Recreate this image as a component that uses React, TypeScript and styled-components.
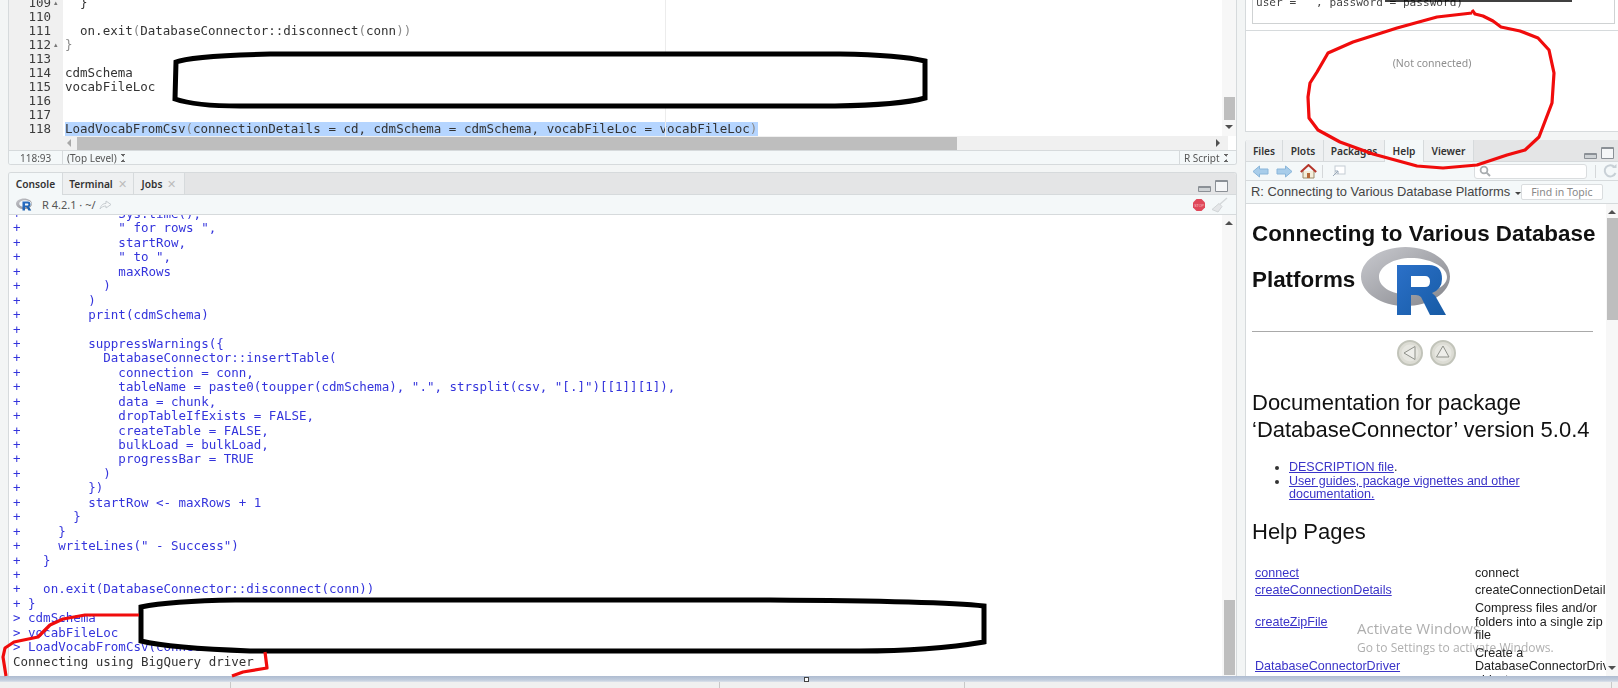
import React from "react";
import styled, { createGlobalStyle } from "styled-components";

const Global = createGlobalStyle`
  html, body { margin: 0; padding: 0; width: 1618px; height: 688px; overflow: hidden; background: #f3f5f5; }
  #root { width: 1618px; height: 688px; }
  * { box-sizing: border-box; }
`;

const MONO = `"DejaVu Sans Mono", "Liberation Mono", monospace`;
const UI = `"Noto Sans", "Open Sans", sans-serif`;
const ARIAL = `"Liberation Sans", Arial, sans-serif`;
const BORDER = "#d6dadc";

const Page = styled.div`
  position: relative; width: 1618px; height: 688px; display: flex; flex-direction: column;
  overflow: hidden; filter: blur(0.3px);
`;
const Workspace = styled.div`display: flex; height: 676px; padding-left: 8px; gap: 8px;`;
const LeftColumn = styled.div`width: 1229px; display: flex; flex-direction: column; gap: 7px;`;
const RightColumn = styled.div`flex: 1; min-width: 0; display: flex; flex-direction: column; gap: 8px;`;

const EditorPane = styled.section`
  height: 165px; display: flex; flex-direction: column; background: #fff;
  border: 1px solid ${BORDER}; border-top: 0; border-radius: 0 0 3px 3px; overflow: hidden;
`;
const EditorMain = styled.div`height: 136px; display: flex;`;
const Gutter = styled.div`
  width: 54px; background: #f0f0f0; display: flex; flex-direction: column; justify-content: flex-end;
`;
const GutterLine = styled.div`
  height: 14px; display: flex; justify-content: flex-end; align-items: center;
  font: 12.5px/14px ${MONO}; color: #3c3c3c;
`;
const FoldSlot = styled.span`
  width: 12px; padding-left: 3px; font-size: 7px; line-height: 14px; color: #777; font-family: ${UI};
`;
const CodeArea = styled.div`
  position: relative; flex: 1; min-width: 0; display: flex; flex-direction: column; justify-content: flex-end;
  overflow: hidden; padding-left: 2px;
`;
const MarginLine = styled.div`position: absolute; left: 602px; top: 0; bottom: 0; width: 1px; background: #ececec;`;
const CodeLine = styled.div<{ $sel?: boolean }>`
  height: 14px; width: ${(p) => (p.$sel ? "693px" : "auto")}; white-space: pre; flex: none;
  font: 12.5px/14px ${MONO}; color: #333; background: ${(p) => (p.$sel ? "#b5d5ff" : "transparent")};
`;
const Paren = styled.span`color: #8a8a8a;`;

const VScroll = styled.div<{ $w?: number }>`
  width: ${(p) => p.$w ?? 14}px; flex: none; display: flex; flex-direction: column; align-items: center; background: #f7f7f7; position: relative;
`;
const VThumb = styled.div<{ $top: number; $h: number }>`
  width: 11px; height: ${(p) => p.$h}px; margin-top: ${(p) => p.$top}px; background: #bebebe;
`;
const Tri = styled.span<{ $dir: "up" | "down" | "left" | "right" }>`
  display: block; width: 0; height: 0; flex: none;
  ${(p) =>
    p.$dir === "up"
      ? "border-left:4px solid transparent;border-right:4px solid transparent;border-bottom:4px solid #505050;"
      : p.$dir === "down"
      ? "border-left:4px solid transparent;border-right:4px solid transparent;border-top:4px solid #505050;"
      : p.$dir === "left"
      ? "border-top:4px solid transparent;border-bottom:4px solid transparent;border-right:4px solid #a8a8a8;"
      : "border-top:4px solid transparent;border-bottom:4px solid transparent;border-left:4px solid #505050;"}
`;
const SpacerV = styled.div<{ $h: number }>`height: ${(p) => p.$h}px; flex: none;`;
const Grow = styled.div`flex: 1;`;

const HScroll = styled.div`
  height: 14px; flex: none; display: flex; align-items: center; background: #f0f0f0; padding-left: 58px;
`;
const HThumb = styled.div`width: 880px; height: 13px; margin-left: 6px; background: #bebebe;`;
const HEnd = styled.div`
  margin-left: auto; width: 20px; height: 14px; display: flex; align-items: center; background: linear-gradient(90deg,#f0f0f0 60%,#fff 60%);
`;

const StatusBar = styled.div`
  height: 15px; flex: none; display: flex; align-items: center; background: #f4f8f9; border-top: 1px solid ${BORDER};
  font: 10px/14px ${UI}; color: #555;
`;
const Position = styled.div`width: 54px; padding-left: 11px; height: 100%; border-right: 1px solid ${BORDER};`;
const Scope = styled.div`padding-left: 4px; flex: 1; display: flex; align-items: center; gap: 4px;`;
const FileType = styled.div`width: 57px; height: 100%; padding-left: 4px; border-left: 1px solid ${BORDER}; display: flex; align-items: center; gap: 4px;`;
const UpDown = styled.span`
  display: inline-block; width: 5px; height: 8px;
  background:
    linear-gradient(45deg, transparent 50%, #666 50%) 0 0 / 2.5px 3px no-repeat,
    linear-gradient(-45deg, transparent 50%, #666 50%) 2.5px 0 / 2.5px 3px no-repeat,
    linear-gradient(135deg, transparent 50%, #666 50%) 0 5px / 2.5px 3px no-repeat,
    linear-gradient(-135deg, transparent 50%, #666 50%) 2.5px 5px / 2.5px 3px no-repeat;
`;

const ConsolePane = styled.section`
  flex: 1; min-height: 0; display: flex; flex-direction: column; background: #fff;
  border: 1px solid ${BORDER}; border-bottom: 0; border-radius: 3px 3px 0 0; overflow: hidden;
`;
const TabStrip = styled.div`
  height: 22px; flex: none; display: flex; align-items: stretch; background: #e4e5e6; border-bottom: 1px solid ${BORDER};
`;
const Tab = styled.div<{ $active?: boolean; $w: number }>`
  width: ${(p) => p.$w}px; margin-bottom: ${(p) => (p.$active ? "-1px" : "0")}; display: flex; align-items: center; justify-content: center; gap: 5px;
  background: ${(p) => (p.$active ? "#f4f8f9" : "#eef0f1")}; border-right: 1px solid ${BORDER};
  font: 600 10.2px/14px ${UI}; color: #333;
`;
const TabClose = styled.span`color: #bcbcbc; font-size: 11px; font-weight: 400;`;
const WindowControls = styled.div<{ $right: number }>`
  margin-left: auto; padding-right: ${(p) => p.$right}px; display: flex; align-items: flex-end; gap: 4px; padding-bottom: 2px;
`;
const Minimize = styled.span`
  display: block; width: 13px; height: 6px; border: 1px solid #8b9096; border-top-width: 2px; background: #cfd3d6; border-radius: 1px;
`;
const Maximize = styled.span`
  display: block; width: 13px; height: 12px; border: 1px solid #8b9096; border-top-width: 2px; background: #f5f6f7; border-radius: 1px;
`;
const ConsoleBar = styled.div`
  height: 20px; flex: none; display: flex; align-items: center; padding: 0 8px 0 7px; background: #f4f8f9; border-bottom: 1px solid ${BORDER};
  font: 11px/14px ${UI}; color: #555;
`;
const ConsoleBarLabel = styled.span`margin-left: 10px;`;
const ConsoleBarEnd = styled.div`margin-left: auto; display: flex; align-items: center; gap: 6px;`;
const ConsoleMain = styled.div`flex: 1; min-height: 0; display: flex;`;
const ConsoleBody = styled.div`
  flex: 1; min-width: 0; display: flex; flex-direction: column; justify-content: flex-end; overflow: hidden;
  padding: 0 0 7px 4px;
`;
const ConsoleLine = styled.div<{ $out?: boolean }>`
  flex: none; height: 14.45px; white-space: pre; font: 12.5px/14.45px ${MONO};
  color: ${(p) => (p.$out ? "#333" : "#3434dc")};
`;

const ObjectsPane = styled.section`
  height: 132px; flex: none; background: #fff; border-bottom: 1px solid ${BORDER}; border-left: 1px solid ${BORDER}; display: flex; flex-direction: column;
`;
const ConnectionBox = styled.div`
  height: 31px; flex: none; padding: 0 3px 6px 6px; border-bottom: 1px solid ${BORDER};
`;
const ConnectionInner = styled.div`
  height: 24px; border: 1px solid #cfd2d3; border-top: 0; padding-left: 3px;
  font: 11.1px/6px ${MONO}; color: #444; white-space: pre; overflow: hidden;
`;
const NotConnected = styled.div`
  text-align: center; padding-top: 25px; font: 10.5px/14px ${UI}; color: #8e8e8e;
`;

const HelpPane = styled.section`
  flex: 1; min-height: 0; display: flex; flex-direction: column; background: #fff; border-left: 1px solid ${BORDER}; border-radius: 3px 0 0 0; overflow: hidden;
`;
const HelpToolbar = styled.div`
  height: 19px; flex: none; display: flex; align-items: center; padding-left: 6px; background: #f4f8f9; border-bottom: 1px solid ${BORDER};
`;
const Sep = styled.span<{ $ml: number }>`display: block; width: 1px; height: 13px; background: #d5d8da; margin-left: ${(p) => p.$ml}px;`;
const SearchBox = styled.div`
  margin-left: auto; width: 113px; height: 15px; background: #fff; border: 1px solid #dadddf; border-radius: 3px; display: flex; align-items: center; padding-left: 4px;
`;
const ToolEnd = styled.div`display: flex; align-items: center; gap: 7px; padding: 0 0 0 8px; width: 31px;`;
const TopicBar = styled.div`
  height: 23px; flex: none; display: flex; align-items: center; padding-left: 5px; background: #f4f8f9; border-bottom: 1px solid ${BORDER};
  font: 12.9px/16px ${ARIAL}; color: #444; white-space: nowrap;
`;
const Caret = styled.span`
  width: 0; height: 0; margin-left: 5px; margin-top: 3px; border-left: 3px solid transparent; border-right: 3px solid transparent; border-top: 3px solid #444;
`;
const FindBox = styled.div`
  margin-left: auto; margin-right: 15px; width: 85px; height: 16px; background: #fff; border: 1px solid #dadddf; border-radius: 2px; padding-left: 9px;
  font: 10.5px/14px ${UI}; color: #888;
`;
const HelpMain = styled.div`flex: 1; min-height: 0; display: flex;`;
const HelpBody = styled.article`
  flex: 1; min-width: 0; padding: 7px 6px 0 6px; overflow: hidden; font-family: ${ARIAL}; color: #111;
`;
const HelpTitle = styled.h1`
  margin: 0; font: 700 22.4px/46px ${ARIAL}; color: #111; white-space: nowrap;
`;
const TitleRow = styled.div`display: flex; align-items: flex-start; height: 60px;`;
const TitleWord = styled.span`font: 700 22.4px/46px ${ARIAL}; margin-right: 6px;`;
const LogoSlot = styled.div`margin-top: -10px; flex: none;`;
const Rule = styled.hr`margin: 14px 7px 0 0; border: 0; height: 1px; background: #a9a9a9;`;
const NavIcons = styled.div`display: flex; justify-content: center; gap: 7px; margin-top: 8px;`;
const DocHeading = styled.h2`margin: 23px 0 0; font: 400 22px/27px ${ARIAL}; color: #111; white-space: nowrap;`;
const LinkList = styled.ul`margin: 18px 0 0; padding: 0 0 0 37px; font: 12.5px/13.6px ${ARIAL};`;
const LinkItem = styled.li`color: #333;`;
const HelpLink = styled.a`color: #3a33c8; text-decoration: underline;`;
const PagesHeading = styled.h2`margin: 16px 0 0; font: 400 22px/27px ${ARIAL}; color: #111;`;
const IndexGrid = styled.div`
  margin-top: 20px; display: grid; grid-template-columns: 223px 137px; font: 12.55px/13.6px ${ARIAL}; width: 360px;
`;
const IndexName = styled.div`padding: 2px 0 2px 3px; align-self: center;`;
const IndexDesc = styled.div`padding: 2px 0; overflow: hidden; color: #222;`;
const NoWrap = styled.span`white-space: nowrap;`;

const Splitter = styled.div`
  position: relative; height: 6px; flex: none; background: linear-gradient(180deg,#aebbd0,#c3cede 70%,#dde3ec);
`;
const SplitHandle = styled.span`
  position: absolute; left: 804px; top: 1px; width: 5px; height: 5px; background: #fff; border: 1px solid #444;
`;
const TaskBar = styled.div`height: 6px; flex: none; display: flex; background: #f0f0f0;`;
const TaskCell = styled.span<{ $w: number }>`width: ${(p) => p.$w}px; height: 100%; border-right: 1px solid #c8c8c8;`;

const Watermark = styled.div`
  position: absolute; left: 1357px; top: 618px; pointer-events: none; color: rgba(125,125,125,.62); font-family: "Open Sans", sans-serif;
`;
const WatermarkTitle = styled.div`font-size: 15px; line-height: 20px;`;
const WatermarkSub = styled.div`font-size: 12px; line-height: 15px; margin-top: 2px; white-space: nowrap;`;
const Annotations = styled.svg`position: absolute; left: 0; top: 0; pointer-events: none;`;

const RLogo = ({ w, h, id }: { w: number; h: number; id: string }) => (
  <svg width={w} height={h} viewBox="0 0 89 68" style={{ flex: "none", display: "block" }}>
    <defs>
      <linearGradient id={id + "g"} x1="0" y1="0" x2="1" y2="1">
        <stop offset="0" stopColor="#c9cacf" />
        <stop offset="1" stopColor="#85868c" />
      </linearGradient>
      <linearGradient id={id + "b"} x1="0" y1="0" x2="1" y2="1">
        <stop offset="0" stopColor="#2b70c8" />
        <stop offset="1" stopColor="#175ba5" />
      </linearGradient>
    </defs>
    <path
      fillRule="evenodd"
      fill={`url(#${id}g)`}
      d="M44.5 0C69 0 89 13.2 89 29.5S69 59 44.5 59 0 45.8 0 29.5 20 0 44.5 0ZM50 11C33 11 18 19 18 30S33 48 50 48 86 41 86 30 67 11 50 11Z"
    />
    <path
      fillRule="evenodd"
      fill={`url(#${id}b)`}
      d="M36 18H68Q81 18 81 32 81 42 71 46 74 48 76 52L85 68H69L60 50Q58 48 55 48H50V68H36ZM50 29V40H64Q69 40 69 34.5 69 29 64 29Z"
    />
  </svg>
);

const NavCircle = ({ up }: { up?: boolean }) => (
  <svg width="26" height="26" viewBox="0 0 26 26">
    <circle cx="13" cy="13" r="12" fill="#dcdcd4" stroke="#c2c4ba" strokeWidth="2" />
    <circle cx="13" cy="13" r="8.5" fill="#e6e6e0" />
    {up ? (
      <path d="M6.5 17 13 6l6 11Z" fill="#eeeeea" stroke="#8f918a" />
    ) : (
      <path d="M18 6.5v13L7 13Z" fill="#eeeeea" stroke="#8f918a" />
    )}
  </svg>
);

const BlueArrow = ({ right }: { right?: boolean }) => (
  <svg width="17" height="13" viewBox="0 0 17 13" style={{ transform: right ? "scaleX(-1)" : undefined, flex: "none", marginRight: 7 }}>
    <path d="M1 6.5 7.5 1v3H16v5H7.5v3Z" fill="#a8cdea" stroke="#8ab6da" />
  </svg>
);

const HomeIcon = () => (
  <svg width="17" height="15" viewBox="0 0 17 15" style={{ flex: "none" }}>
    <path d="M3 7v7h11V7" fill="#f4eeda" stroke="#9c8b6a" />
    <rect x="7" y="9" width="3" height="5" fill="#b56a3a" />
    <path d="M.8 8 8.5 1l7.7 7" fill="none" stroke="#b5352a" strokeWidth="2" />
  </svg>
);

const PopoutIcon = () => (
  <svg width="14" height="12" viewBox="0 0 14 12" style={{ marginLeft: 9, flex: "none" }}>
    <rect x="3" y="1" width="10" height="8" fill="#fff" stroke="#c4ccd4" />
    <path d="M1 11 6 6M6 6v3M6 6H3" stroke="#98a8b8" fill="none" />
  </svg>
);

const SearchGlyph = () => (
  <svg width="12" height="12" viewBox="0 0 12 12">
    <circle cx="5" cy="5" r="3.4" fill="none" stroke="#a9adb0" strokeWidth="1.8" />
    <path d="m7.6 7.6 3.4 3.4" stroke="#a9adb0" strokeWidth="2" />
  </svg>
);

const RefreshGlyph = () => (
  <svg width="15" height="14" viewBox="0 0 15 14">
    <path d="M12.5 9A5.6 5.6 0 1 1 11.5 3" fill="none" stroke="#c8d0d6" strokeWidth="2" />
    <path d="M9 4h4.5V0Z" fill="#c8d0d6" />
  </svg>
);

const StopIcon = () => (
  <svg width="12" height="12" viewBox="0 0 12 12">
    <path d="M3.5 0h5L12 3.5v5L8.5 12h-5L0 8.5v-5Z" fill="#e0485a" />
    <text x="6" y="7.6" fontSize="3.6" textAnchor="middle" fill="#f7c7cc" fontFamily="Liberation Sans">STOP</text>
  </svg>
);

const BroomIcon = () => (
  <svg width="17" height="16" viewBox="0 0 17 16">
    <path d="M16 1 8 8" stroke="#d4d8da" strokeWidth="1.4" />
    <path d="M8 6.5 11 9.5 7 15 1 12.5Z" fill="#e4e6e8" stroke="#d0d4d6" />
  </svg>
);

const ShareGlyph = () => (
  <svg width="13" height="11" viewBox="0 0 13 11" style={{ marginLeft: 3 }}>
    <path d="M1 10C2 6 4 4.5 7 4.5V2l5 3.5L7 9V7C4.5 7 2.5 8 1 10Z" fill="#f6f8f9" stroke="#c6ccd0" />
  </svg>
);

type EL = { n: number; fold?: boolean; code?: React.ReactNode; sel?: boolean };
const editorLines: EL[] = [
  { n: 109, fold: true, code: "  }" },
  { n: 110 },
  { n: 111, code: <>  on.exit<Paren>(</Paren>DatabaseConnector::disconnect<Paren>(</Paren>conn<Paren>))</Paren></> },
  { n: 112, fold: true, code: <Paren>{"}"}</Paren> },
  { n: 113 },
  { n: 114, code: "cdmSchema" },
  { n: 115, code: "vocabFileLoc" },
  { n: 116 },
  { n: 117 },
  {
    n: 118,
    sel: true,
    code: <>LoadVocabFromCsv<Paren>(</Paren>connectionDetails = cd, cdmSchema = cdmSchema, vocabFileLoc = vocabFileLoc<Paren>)</Paren></>,
  },
];

const consoleLines = [
  '+             Sys.time(),',
  '+             " for rows ",',
  '+             startRow,',
  '+             " to ",',
  '+             maxRows',
  '+           )',
  '+         )',
  '+         print(cdmSchema)',
  '+ ',
  '+         suppressWarnings({',
  '+           DatabaseConnector::insertTable(',
  '+             connection = conn,',
  '+             tableName = paste0(toupper(cdmSchema), ".", strsplit(csv, "[.]")[[1]][1]),',
  '+             data = chunk,',
  '+             dropTableIfExists = FALSE,',
  '+             createTable = FALSE,',
  '+             bulkLoad = bulkLoad,',
  '+             progressBar = TRUE',
  '+           )',
  '+         })',
  '+         startRow <- maxRows + 1',
  '+       }',
  '+     }',
  '+     writeLines(" - Success")',
  '+   }',
  '+ ',
  '+   on.exit(DatabaseConnector::disconnect(conn))',
  '+ }',
  '> cdmSchema',
  '> vocabFileLoc',
  '> LoadVocabFromCsv(connectionDetails = cd, cdmSchema = cdmSchema, vocabFileLoc = vocabFileLoc)',
];

const rightTabs: [string, number, boolean?][] = [
  ["Files", 37],
  ["Plots", 41],
  ["Packages", 61],
  ["Help", 39, true],
  ["Viewer", 50],
];

export default function App() {
  return (
    <Page>
      <Global />
      <Workspace>
        <LeftColumn>
          <EditorPane>
            <EditorMain>
              <Gutter>
                {editorLines.map((l) => (
                  <GutterLine key={l.n}>
                    {l.n}
                    <FoldSlot>{l.fold ? "▴" : ""}</FoldSlot>
                  </GutterLine>
                ))}
              </Gutter>
              <CodeArea>
                <MarginLine />
                {editorLines.map((l) => (
                  <CodeLine key={l.n} $sel={l.sel}>{l.code ?? " "}</CodeLine>
                ))}
              </CodeArea>
              <VScroll>
                <VThumb $top={97} $h={23} />
                <SpacerV $h={5} />
                <Tri $dir="down" />
              </VScroll>
            </EditorMain>
            <HScroll>
              <Tri $dir="left" />
              <HThumb />
              <HEnd><Tri $dir="right" /></HEnd>
            </HScroll>
            <StatusBar>
              <Position>118:93</Position>
              <Scope>(Top Level)<UpDown /></Scope>
              <FileType>R Script<UpDown /></FileType>
            </StatusBar>
          </EditorPane>

          <ConsolePane>
            <TabStrip>
              <Tab $active $w={54}>Console</Tab>
              <Tab $w={71}>Terminal <TabClose>✕</TabClose></Tab>
              <Tab $w={51}>Jobs <TabClose>✕</TabClose></Tab>
              <WindowControls $right={8}><Minimize /><Maximize /></WindowControls>
            </TabStrip>
            <ConsoleBar>
              <RLogo w={16} h={13} id="rs" />
              <ConsoleBarLabel>R 4.2.1 · ~/</ConsoleBarLabel>
              <ShareGlyph />
              <ConsoleBarEnd><StopIcon /><BroomIcon /></ConsoleBarEnd>
            </ConsoleBar>
            <ConsoleMain>
              <ConsoleBody>
                {consoleLines.map((l, i) => <ConsoleLine key={i}>{l}</ConsoleLine>)}
                <ConsoleLine $out>Connecting using BigQuery driver</ConsoleLine>
              </ConsoleBody>
              <VScroll>
                <SpacerV $h={6} />
                <Tri $dir="up" />
                <Grow />
                <VThumb $top={0} $h={75} />
                <SpacerV $h={1} />
              </VScroll>
            </ConsoleMain>
          </ConsolePane>
        </LeftColumn>

        <RightColumn>
          <ObjectsPane>
            <ConnectionBox>
              <ConnectionInner>user =   , password = password)</ConnectionInner>
            </ConnectionBox>
            <NotConnected>(Not connected)</NotConnected>
          </ObjectsPane>

          <HelpPane>
            <TabStrip>
              {rightTabs.map(([t, w, a]) => <Tab key={t} $w={w} $active={a}>{t}</Tab>)}
              <WindowControls $right={4}><Minimize /><Maximize /></WindowControls>
            </TabStrip>
            <HelpToolbar>
              <BlueArrow />
              <BlueArrow right />
              <HomeIcon />
              <Sep $ml={5} />
              <PopoutIcon />
              <SearchBox><SearchGlyph /></SearchBox>
              <ToolEnd><Sep $ml={0} /><RefreshGlyph /></ToolEnd>
            </HelpToolbar>
            <TopicBar>
              R: Connecting to Various Database Platforms<Caret />
              <FindBox>Find in Topic</FindBox>
            </TopicBar>
            <HelpMain>
              <HelpBody>
                <HelpTitle>Connecting to Various Database</HelpTitle>
                <TitleRow>
                  <TitleWord>Platforms</TitleWord>
                  <LogoSlot><RLogo w={89} h={68} id="rl" /></LogoSlot>
                </TitleRow>
                <Rule />
                <NavIcons><NavCircle /><NavCircle up /></NavIcons>
                <DocHeading>Documentation for package<br />‘DatabaseConnector’ version 5.0.4</DocHeading>
                <LinkList>
                  <LinkItem><HelpLink>DESCRIPTION file</HelpLink>.</LinkItem>
                  <LinkItem><HelpLink>User guides, package vignettes and other documentation.</HelpLink></LinkItem>
                </LinkList>
                <PagesHeading>Help Pages</PagesHeading>
                <IndexGrid>
                  <IndexName><HelpLink>connect</HelpLink></IndexName>
                  <IndexDesc>connect</IndexDesc>
                  <IndexName><HelpLink>createConnectionDetails</HelpLink></IndexName>
                  <IndexDesc><NoWrap>createConnectionDetails</NoWrap></IndexDesc>
                  <IndexName><HelpLink>createZipFile</HelpLink></IndexName>
                  <IndexDesc>Compress files and/or folders into a single zip file</IndexDesc>
                  <IndexName><HelpLink>DatabaseConnectorDriver</HelpLink></IndexName>
                  <IndexDesc>Create a <NoWrap>DatabaseConnectorDriver</NoWrap> object</IndexDesc>
                </IndexGrid>
              </HelpBody>
              <VScroll $w={12}>
                <SpacerV $h={6} />
                <Tri $dir="up" />
                <VThumb $top={4} $h={102} />
                <Grow />
                <Tri $dir="down" />
                <SpacerV $h={6} />
              </VScroll>
            </HelpMain>
          </HelpPane>
        </RightColumn>
      </Workspace>
      <Splitter><SplitHandle /></Splitter>
      <TaskBar>
        <TaskCell $w={231} />
        <TaskCell $w={489} />
        <TaskCell $w={245} />
        <TaskCell $w={647} />
      </TaskBar>

      <Watermark>
        <WatermarkTitle>Activate Windows</WatermarkTitle>
        <WatermarkSub>Go to Settings to activate Windows.</WatermarkSub>
      </Watermark>

      <Annotations width="1618" height="688" viewBox="0 0 1618 688">
        <path d="M176 62 Q190 56 270 54 H840 Q900 55 925 61 V98 Q900 105 835 106 H240 Q195 106 175 99 Z" fill="#fff" stroke="#000" strokeWidth="5" />
        <path d="M141 607 Q170 601 235 600 H770 Q940 601 984 606 V642 Q930 651 860 651 H250 Q170 648 141 641 Z" fill="#fff" stroke="#000" strokeWidth="5" />
        <path d="M1385 1H1572" stroke="#000" strokeWidth="1.6" />
        <path
          d="M1472 10 L1475 14 L1483 16 L1493 21 L1501 27 L1520 31 L1538 38 L1549 50 L1554 73 L1552 103 L1539 137 L1525 150 L1507 155 L1477 165 L1443 168 L1417 166 L1373 154 L1340 142 L1318 130 L1309 118 L1308 97 L1310 83 L1317 72 L1328 53 L1353 42 L1397 28 L1437 17 L1472 13"
          fill="none" stroke="#f00c0c" strokeWidth="3.2" strokeLinejoin="round"
        />
        <path
          d="M139 615 L85 615 L63 619 L50 625 L38 637 L14 642 L5 648 L3 657 L6 676"
          fill="none" stroke="#f00c0c" strokeWidth="3.2" strokeLinejoin="round"
        />
        <path d="M265 652 L267 668 L243 672 L232 676" fill="none" stroke="#f00c0c" strokeWidth="3.2" strokeLinejoin="round" />
      </Annotations>
    </Page>
  );
}
